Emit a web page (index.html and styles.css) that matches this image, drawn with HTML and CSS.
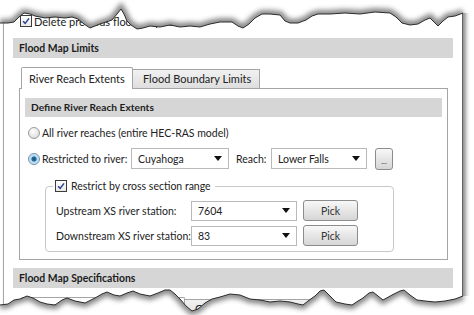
FILE: index.html
```html
<!DOCTYPE html>
<html>
<head>
<meta charset="utf-8">
<link rel="stylesheet" href="styles.css">
</head>
<body>
<div class="page">
  <div class="sheet">
    <div class="top-row"><span class="cb"><svg viewBox="0 0 12 12"><path d="M2.5 6.2 L5 8.8 L9.6 2.8" /></svg></span><span class="top-text">Delete previous flood map results</span></div>
    <div class="band">Flood Map Limits</div>
    <div class="tabs">
      <div class="tabstrip">
        <div class="tab active">River Reach Extents</div>
        <div class="tab">Flood Boundary Limits</div>
      </div>
      <div class="panel">
        <div class="band inner">Define River Reach Extents</div>
        <div class="row r1"><span class="radio"></span><span>All river reaches (entire HEC-RAS model)</span></div>
        <div class="row r2">
          <span class="radio on"></span>
          <span class="lbl lbl-river">Restricted to river:</span>
          <div class="combo c-river"><span>Cuyahoga</span><span class="arrow"></span></div>
          <span class="lbl lbl-reach">Reach:</span>
          <div class="combo c-reach"><span>Lower Falls</span><span class="arrow"></span></div>
          <div class="btn dots">...</div>
        </div>
        <fieldset class="group">
          <legend class="legend"><span class="cb"><svg viewBox="0 0 12 12"><path d="M2.5 6.2 L5 8.8 L9.6 2.8" /></svg></span><span>Restrict by cross section range</span></legend>
          <div class="xsrow">
            <span class="xslbl">Upstream XS river station:</span>
            <div class="combo c-xs"><span>7604</span><span class="arrow"></span></div>
            <div class="btn pick">Pick</div>
          </div>
          <div class="xsrow second">
            <span class="xslbl">Downstream XS river station:</span>
            <div class="combo c-xs"><span>83</span><span class="arrow"></span></div>
            <div class="btn pick">Pick</div>
          </div>
        </fieldset>
      </div>
    </div>
    <div class="band spec">Flood Map Specifications</div>
    <div class="tabs tabs2">
      <div class="tabstrip">
        <div class="tab active wide">Flood Map Options</div>
        <div class="tab">Contours</div>
      </div>
      <div class="panel empty"></div>
    </div>
  </div>
  <svg class="tear" viewBox="0 0 474 315" width="474" height="315">
    <defs>
      <filter id="soft" x="-10%" y="-50%" width="120%" height="200%"><feGaussianBlur stdDeviation="2.6"/></filter>
      <clipPath id="aboveTop"><polygon points="0,0 0,23 8,23 14,22 19,17 24,13 30,14 35,16 45,18 55,17 65,18 72,17 78,19 84,24 90,28 95,26 100,24 106,22 112,20 117,14 121,9 124,14 127,21 131,25 137,29 143,28 150,26 160,27 170,25 180,27 190,26 200,27 210,24 220,22 232,22 238,26 243,28 249,24 255,18 262,14 270,14 280,15 285,21 290,23 298,23 306,20 312,16 318,14 330,14 345,13 360,14 375,12 390,13 396,17 402,23 410,25 418,24 425,20 430,18 434,22 438,26 443,21 448,17 455,16 463,13 474,13 474,0"/></clipPath>
      <clipPath id="belowBottom"><polygon points="0,315 0,305 8,304 14,300 20,299 27,296 33,298 40,302 47,304 55,305 62,300 67,298 75,301 85,303 95,298 102,294 107,292 114,295 120,296 127,293 133,291 140,294 150,296 158,293 165,290 170,290 175,294 180,299 186,306 192,311 198,309 205,303 212,299 220,297 230,294 240,295 250,299 260,300 270,302 280,301 290,302 298,304 303,305 308,301 315,296 320,291 324,290 330,296 336,302 345,304 352,305 358,301 363,298 369,293 373,292 378,296 383,300 392,295 400,291 404,290 410,295 417,300 425,301 435,302 445,301 455,299 463,296 474,296 474,315"/></clipPath>
    </defs>
    <polygon class="paper" points="0,0 0,23 8,23 14,22 19,17 24,13 30,14 35,16 45,18 55,17 65,18 72,17 78,19 84,24 90,28 95,26 100,24 106,22 112,20 117,14 121,9 124,14 127,21 131,25 137,29 143,28 150,26 160,27 170,25 180,27 190,26 200,27 210,24 220,22 232,22 238,26 243,28 249,24 255,18 262,14 270,14 280,15 285,21 290,23 298,23 306,20 312,16 318,14 330,14 345,13 360,14 375,12 390,13 396,17 402,23 410,25 418,24 425,20 430,18 434,22 438,26 443,21 448,17 455,16 463,13 474,13 474,0"/>
    <polygon class="paper" points="0,315 0,305 8,304 14,300 20,299 27,296 33,298 40,302 47,304 55,305 62,300 67,298 75,301 85,303 95,298 102,294 107,292 114,295 120,296 127,293 133,291 140,294 150,296 158,293 165,290 170,290 175,294 180,299 186,306 192,311 198,309 205,303 212,299 220,297 230,294 240,295 250,299 260,300 270,302 280,301 290,302 298,304 303,305 308,301 315,296 320,291 324,290 330,296 336,302 345,304 352,305 358,301 363,298 369,293 373,292 378,296 383,300 392,295 400,291 404,290 410,295 417,300 425,301 435,302 445,301 455,299 463,296 474,296 474,315"/>
    <g clip-path="url(#aboveTop)"><polyline class="shade" filter="url(#soft)" points="0,23 8,23 14,22 19,17 24,13 30,14 35,16 45,18 55,17 65,18 72,17 78,19 84,24 90,28 95,26 100,24 106,22 112,20 117,14 121,9 124,14 127,21 131,25 137,29 143,28 150,26 160,27 170,25 180,27 190,26 200,27 210,24 220,22 232,22 238,26 243,28 249,24 255,18 262,14 270,14 280,15 285,21 290,23 298,23 306,20 312,16 318,14 330,14 345,13 360,14 375,12 390,13 396,17 402,23 410,25 418,24 425,20 430,18 434,22 438,26 443,21 448,17 455,16 463,13"/></g>
    <g clip-path="url(#belowBottom)"><polyline class="shade" filter="url(#soft)" points="0,305 8,304 14,300 20,299 27,296 33,298 40,302 47,304 55,305 62,300 67,298 75,301 85,303 95,298 102,294 107,292 114,295 120,296 127,293 133,291 140,294 150,296 158,293 165,290 170,290 175,294 180,299 186,306 192,311 198,309 205,303 212,299 220,297 230,294 240,295 250,299 260,300 270,302 280,301 290,302 298,304 303,305 308,301 315,296 320,291 324,290 330,296 336,302 345,304 352,305 358,301 363,298 369,293 373,292 378,296 383,300 392,295 400,291 404,290 410,295 417,300 425,301 435,302 445,301 455,299 463,296"/></g>
    <polyline class="edge" points="0,23 8,23 14,22 19,17 24,13 30,14 35,16 45,18 55,17 65,18 72,17 78,19 84,24 90,28 95,26 100,24 106,22 112,20 117,14 121,9 124,14 127,21 131,25 137,29 143,28 150,26 160,27 170,25 180,27 190,26 200,27 210,24 220,22 232,22 238,26 243,28 249,24 255,18 262,14 270,14 280,15 285,21 290,23 298,23 306,20 312,16 318,14 330,14 345,13 360,14 375,12 390,13 396,17 402,23 410,25 418,24 425,20 430,18 434,22 438,26 443,21 448,17 455,16 463,13"/>
    <polyline class="edge" points="0,305 8,304 14,300 20,299 27,296 33,298 40,302 47,304 55,305 62,300 67,298 75,301 85,303 95,298 102,294 107,292 114,295 120,296 127,293 133,291 140,294 150,296 158,293 165,290 170,290 175,294 180,299 186,306 192,311 198,309 205,303 212,299 220,297 230,294 240,295 250,299 260,300 270,302 280,301 290,302 298,304 303,305 308,301 315,296 320,291 324,290 330,296 336,302 345,304 352,305 358,301 363,298 369,293 373,292 378,296 383,300 392,295 400,291 404,290 410,295 417,300 425,301 435,302 445,301 455,299 463,296"/>
  </svg>
</div>
</body>
</html>
```

FILE: styles.css
```css
* { box-sizing: border-box; }
html, body { margin: 0; padding: 0; background: #fff; }
body {
  font-family: Lato, "Open Sans", "Liberation Sans", sans-serif;
  font-size: 10.5px;
  color: #222;
  white-space: nowrap;
}
.page {
  position: relative;
  width: 474px;
  height: 315px;
  overflow: hidden;
  background: #fff;
}
.sheet {
  margin-left: 3px;
  width: 460px;
  height: 315px;
  border-left: 1px solid #a6a6a6;
  border-right: 1px solid #5f5f5f;
  box-shadow: 3px 0 4px rgba(0, 0, 0, 0.45);
  padding: 13px 9px 0 9px;
  background: #fff;
}
.top-row {
  height: 16px;
  display: flex;
  align-items: center;
  padding-left: 7px;
  font-size: 11px;
}
.top-text { margin-left: 2px; }
.cb {
  width: 12px;
  height: 12px;
  border: 1px solid #3c3c3c;
  background: linear-gradient(#fdfdfd, #e9e9e9);
  display: inline-flex;
  flex: none;
}
.cb svg { width: 10px; height: 10px; }
.cb path { fill: none; stroke: #27418c; stroke-width: 1.8; }
.band {
  margin-top: 9px;
  height: 20px;
  line-height: 20px;
  padding-left: 6px;
  background: #d6d6d6;
  font-weight: 700;
  font-size: 10.4px;
  color: #1c1c1c;
}
.band.inner {
  margin-top: 0;
  height: 19px;
  line-height: 19px;
  font-size: 10.2px;
}
.tabs { padding: 9px 5px 0 6px; }
.tabstrip {
  display: flex;
  align-items: flex-end;
  height: 21px;
  padding-left: 2px;
}
.tab {
  height: 19px;
  line-height: 18px;
  padding-left: 10px;
  width: 128px;
  border: 1px solid #a5a5a5;
  border-bottom: none;
  background: linear-gradient(#f1f1f1, #dedede);
  font-size: 11px;
  margin-left: -1px;
}
.tab.active {
  width: 112px;
  height: 22px;
  line-height: 22px;
  padding-left: 7px;
  margin-left: 0;
  margin-bottom: -1px;
  background: #fff;
  border-radius: 2px 2px 0 0;
  position: relative;
  z-index: 1;
}
.panel {
  border: 1px solid #a5a5a5;
  padding: 9px 5px 7px 5px;
  background: #fff;
}
.row {
  display: flex;
  align-items: center;
  padding-left: 3px;
}
.r1 { margin-top: 6px; height: 20px; }
.r2 { margin-top: 5px; height: 21px; }
.radio {
  width: 12px;
  height: 12px;
  border-radius: 50%;
  border: 1px solid #9c9c9c;
  background: radial-gradient(circle at 40% 35%, #ffffff 0, #e4e4e4 60%, #cfcfcf 100%);
  margin-right: 2px;
  flex: none;
}
.radio.on {
  border-color: #6f8fa8;
  background: radial-gradient(circle, #1a4f74 0, #2b6f9c 30%, #a9d4ef 42%, #dff0fb 80%, #c2dcec 100%);
}
.lbl-river { width: 89px; }
.lbl-reach { width: 35px; margin-left: 7px; }
.combo {
  height: 21px;
  border: 1px solid #b9b9b9;
  background: #fff;
  display: flex;
  align-items: center;
  padding-left: 6px;
  padding-right: 6px;
}
.combo .arrow {
  margin-left: auto;
  width: 0;
  height: 0;
  border-left: 4px solid transparent;
  border-right: 4px solid transparent;
  border-top: 5px solid #111;
}
.c-river { width: 98px; }
.c-reach { width: 96px; }
.btn {
  border: 1px solid #8c8c8c;
  border-radius: 3px;
  background: linear-gradient(#f8f8f8, #e6e6e6 50%, #d6d6d6);
  display: flex;
  align-items: center;
  justify-content: center;
  color: #333;
}
.dots {
  width: 18px;
  height: 22px;
  margin-left: 8px;
  font-size: 8px;
  padding-top: 4px;
}
.group {
  margin: 10px 0 0 20px;
  width: 349px;
  border: 1px solid #c8c8c8;
  border-radius: 4px;
  padding: 0 0 5px 0;
  min-width: 0;
}
.legend {
  margin-left: 7px;
  padding: 0 4px 0 2px;
  display: flex;
  align-items: center;
  height: 14px;
}
.legend .cb { margin-right: 4px; }
.xsrow {
  display: flex;
  align-items: center;
  height: 21px;
  margin-top: 7px;
  padding-left: 10px;
}
.xsrow.second { margin-top: 4px; }
.xslbl { width: 135px; }
.c-xs { width: 106px; height: 20px; }
.pick { width: 55px; height: 21px; margin-left: 6px; }
.spec { margin-top: 8px; }
.tab.wide { width: 164px; }
.panel.empty { height: 20px; }
.tear {
  position: absolute;
  left: 0;
  top: 0;
  z-index: 5;
  pointer-events: none;
}
.tear .paper { fill: #fff; }
.tear .shade { fill: none; stroke: #3a3a3a; stroke-width: 8; opacity: 0.6; }
.tear .edge { fill: none; stroke: #2b2b2b; stroke-width: 1; stroke-linejoin: round; }
```
